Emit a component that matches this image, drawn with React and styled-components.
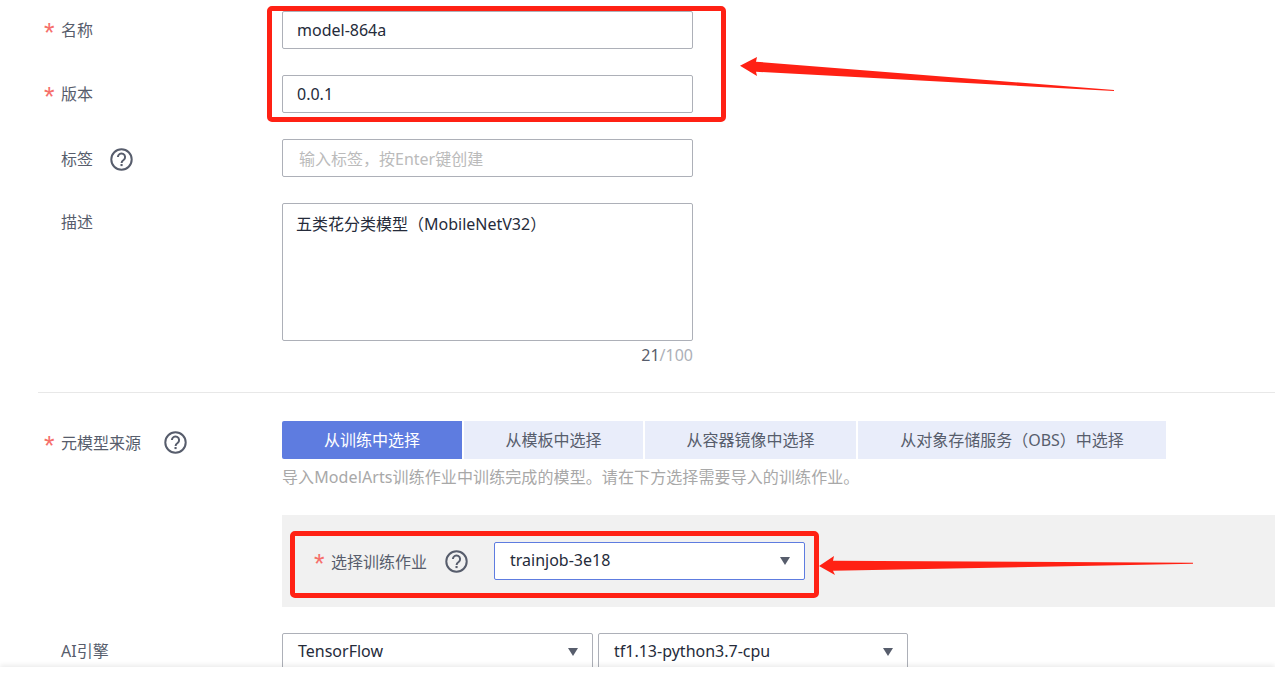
import React from 'react';
import styled, { createGlobalStyle } from 'styled-components';

const FONT = '"Noto Sans", "Noto Sans CJK SC", sans-serif';
const RED = '#ff2114';

const GlobalStyle = createGlobalStyle`
  html, body {
    margin: 0;
    padding: 0;
    background: #fff;
    overflow: hidden;
  }
  * { box-sizing: border-box; }
`;

const Page = styled.div`
  position: relative;
  width: 1275px;
  height: 676px;
  overflow: hidden;
  background: #fff;
  font-family: ${FONT};
  font-size: 16px;
  color: #252b3a;
`;

const Form = styled.div`
  display: flex;
  flex-direction: column;
  padding-top: 11px;
`;

const Row = styled.div`
  display: grid;
  grid-template-columns: 282px 1fr;
  margin-bottom: ${p => p.$gap ?? 26}px;
`;

const Label = styled.div`
  display: flex;
  align-items: flex-start;
  height: 38px;
  padding-left: 44px;
  padding-top: ${p => p.$top ?? 8}px;
  line-height: 22px;
  color: #575d6c;
`;

const Star = styled.span`
  width: 17px;
  flex: none;
  height: 22px;
  color: #f66f6a;
  font-family: "Liberation Sans", sans-serif;
  font-size: 27px;
  line-height: 27px;
  position: relative;
  top: 1px;
`;

const Blank = styled.span`
  width: 17px;
  flex: none;
`;

const HelpWrap = styled.span`
  display: inline-flex;
  margin-left: ${p => p.$gap ?? 17}px;
  margin-top: ${p => p.$top ?? 0}px;
  width: 23px;
  height: 23px;
`;

const Input = styled.input`
  display: block;
  width: 411px;
  height: 38px;
  padding: 0 14px;
  border: 1px solid #adb0b8;
  border-radius: 2px;
  font: inherit;
  color: #252b3a;
  background: #fff;
  outline: none;

  &::placeholder {
    color: #bbbbbb;
    opacity: 1;
  }
`;

const TagInput = styled(Input)`
  padding-left: 16px;
  padding-top: 2px;
`;

const Area = styled.textarea`
  display: block;
  width: 411px;
  height: 138px;
  padding: 8px 13px;
  border: 1px solid #adb0b8;
  border-radius: 2px;
  font: inherit;
  line-height: 24px;
  color: #252b3a;
  background: #fff;
  resize: none;
  outline: none;
`;

const Counter = styled.div`
  width: 411px;
  height: 28px;
  line-height: 28px;
  text-align: right;
  color: #adb0b8;

  b {
    font-weight: 400;
    color: #575d6c;
  }
`;

const Divider = styled.div`
  height: 1px;
  margin: 23px 0 28px 38px;
  background: #e8e8e8;
`;

const Tabs = styled.div`
  display: flex;
  gap: 2px;
`;

const Tab = styled.div`
  width: ${p => p.$width}px;
  height: 38px;
  line-height: 38px;
  text-align: center;
  color: ${p => (p.$active ? '#fff' : '#575d6c')};
  background: ${p => (p.$active ? '#5e7ce0' : '#e9edfa')};
  border-radius: ${p => (p.$active ? '2px 0 0 2px' : '0')};
`;

const Hint = styled.div`
  height: 56px;
  padding-top: 7px;
  line-height: 22px;
  letter-spacing: 0.1px;
  color: #a8a8a8;
`;

const Panel = styled.div`
  display: flex;
  align-items: center;
  height: 92px;
  margin-bottom: 26px;
  margin-left: 282px;
  padding-left: 32px;
  background: #f1f1f1;
`;

const PanelLabel = styled.div`
  display: flex;
  align-items: center;
  width: 180px;
  color: #575d6c;
`;

const Select = styled.div`
  display: flex;
  align-items: center;
  justify-content: space-between;
  width: ${p => p.$width ?? 311}px;
  height: 38px;
  padding: 0 14px 2px 15px;
  border: 1px solid ${p => (p.$focus ? '#5e7ce0' : '#adb0b8')};
  border-radius: 2px;
  background: #fff;
  color: #252b3a;
`;

const Caret = styled.span`
  width: 0;
  height: 0;
  margin-top: 2px;
  border-left: 5.5px solid transparent;
  border-right: 5.5px solid transparent;
  border-top: 8px solid #575d6c;
`;

const SelectGroup = styled.div`
  display: flex;
  gap: 5px;
`;

const BottomBar = styled.div`
  position: absolute;
  left: 0;
  right: 0;
  bottom: 0;
  height: 9px;
  background: #fff;
  box-shadow: 0 -2px 5px rgba(0, 0, 0, 0.08);
`;

const Highlight = styled.div`
  position: absolute;
  left: ${p => p.$x}px;
  top: ${p => p.$y}px;
  width: ${p => p.$w}px;
  height: ${p => p.$h}px;
  border: 5px solid ${RED};
  border-radius: 5px;
`;

const ArrowLayer = styled.svg`
  position: absolute;
  left: 0;
  top: 0;
  width: 1275px;
  height: 676px;
  pointer-events: none;
`;

const Help = ({ gap, top }) => (
  <HelpWrap $gap={gap} $top={top}>
    <svg viewBox="0 0 23 23" width="23" height="23" fill="none">
      <circle cx="11.5" cy="11.5" r="10.2" stroke="#575d6c" strokeWidth="2" />
      <path
        d="M7.9 9.1a3.6 3.6 0 1 1 5.7 2.9c-1.3.9-2 1.5-2 3"
        stroke="#575d6c"
        strokeWidth="2"
      />
      <rect x="10.5" y="16" width="2.1" height="2.1" fill="#575d6c" />
    </svg>
  </HelpWrap>
);

const App = () => (
  <Page>
    <GlobalStyle />
    <Form>
      <Row>
        <Label $top={8}><Star>*</Star>名称</Label>
        <Input readOnly value="model-864a" />
      </Row>
      <Row>
        <Label $top={8}><Star>*</Star>版本</Label>
        <Input readOnly value="0.0.1" />
      </Row>
      <Row>
        <Label $top={9}><Blank />标签<Help gap={17} /></Label>
        <TagInput readOnly placeholder="输入标签，按Enter键创建" />
      </Row>
      <Row $gap={0}>
        <Label><Blank />描述</Label>
        <div>
          <Area readOnly value="五类花分类模型（MobileNetV32）" />
          <Counter><b>21</b>/100</Counter>
        </div>
      </Row>
      <Divider />
      <Row $gap={0}>
        <Label $top={11}><Star>*</Star>元模型来源<Help gap={23} top={-1} /></Label>
        <div>
          <Tabs>
            <Tab $active $width={180}>从训练中选择</Tab>
            <Tab $width={179}>从模板中选择</Tab>
            <Tab $width={211}>从容器镜像中选择</Tab>
            <Tab $width={308}>从对象存储服务（OBS）中选择</Tab>
          </Tabs>
          <Hint>导入ModelArts训练作业中训练完成的模型。请在下方选择需要导入的训练作业。</Hint>
        </div>
      </Row>
      <Panel>
        <PanelLabel><Star>*</Star>选择训练作业<Help gap={18} /></PanelLabel>
        <Select $focus>trainjob-3e18<Caret /></Select>
      </Panel>
      <Row $gap={0}>
        <Label $top={7}><Blank />AI引擎</Label>
        <SelectGroup>
          <Select>TensorFlow<Caret /></Select>
          <Select $width={310}>tf1.13-python3.7-cpu<Caret /></Select>
        </SelectGroup>
      </Row>
    </Form>

    <BottomBar />

    <Highlight $x={267} $y={6} $w={459} $h={116} />
    <Highlight $x={290} $y={531} $w={529} $h={67} />
    <ArrowLayer viewBox="0 0 1275 676">
      <polygon fill={RED} points="740,65.7 757,57 756,61.7 1114,90 1114,91 756,71.7 757,76" />
      <polygon fill={RED} points="819,566 834,556 833,560.7 1193,562.8 1193,563.8 833,570.7 835,575" />
    </ArrowLayer>
  </Page>
);

export default App;
